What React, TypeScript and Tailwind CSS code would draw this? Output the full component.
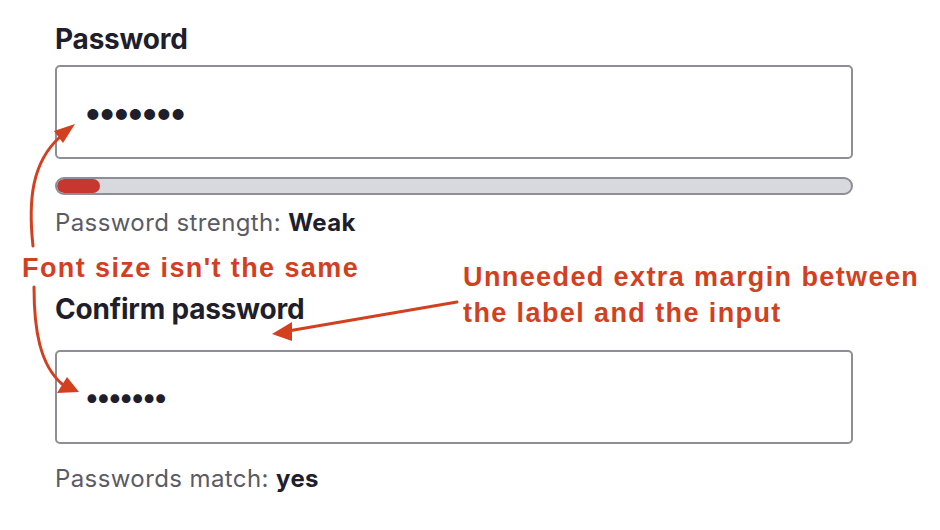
export default function App() {
  const red = '#d2401f';
  return (
    <div className="relative h-[530px] w-[940px] overflow-hidden bg-white font-['Inter',sans-serif]">
      <div className="ml-[55px] flex w-[798px] flex-col pt-[22px]">
        <label className="text-[28px] font-bold leading-[35px] tracking-[-0.2px] text-[#1e1e2c]">Password</label>
        <div className="mt-[8px] flex h-[94px] items-center rounded-[5px] border-2 border-[#8e8f96] pl-[26px]">
          <span className="text-[35px] leading-none tracking-[-5.5px] text-[#1e1e2c]">•••••••</span>
        </div>
        <div className="mt-[18px] h-[18px] overflow-hidden rounded-full border-2 border-[#8e8f96] bg-[#d8d9de]">
          <div className="h-full w-[43px] rounded-full bg-[#c8372f]" />
        </div>
        <p className="mt-[10px] text-[24px] leading-[36px] tracking-[0.4px] text-[#5a5b66]">
          Password strength: <span className="font-bold text-[#1e1e2c]">Weak</span>
        </p>
        <label className="mt-[51px] text-[28px] font-bold leading-[35px] tracking-[-0.2px] text-[#1e1e2c]">Confirm password</label>
        <div className="mt-[23px] flex h-[94px] items-center rounded-[5px] border-2 border-[#8e8f96] pl-[27px]">
          <span className="text-[28px] leading-none tracking-[-4.3px] text-[#1e1e2c]">•••••••</span>
        </div>
        <p className="mt-[17px] text-[24px] leading-[36px] tracking-[0.4px] text-[#5a5b66]">
          Passwords match: <span className="font-bold text-[#1e1e2c]">yes</span>
        </p>
      </div>

      {/* annotations */}
      <div className="absolute left-[22px] top-[250px] font-['Liberation_Sans',sans-serif] text-[27px] font-bold leading-[36px] tracking-[1.4px] text-[#d2401f]">
        Font size isn't the same
      </div>
      <div className="absolute left-[463px] top-[259px] font-['Liberation_Sans',sans-serif] text-[27px] font-bold leading-[36px] tracking-[1.4px] text-[#d2401f]">
        Unneeded extra margin between
        <br />
        the label and the input
      </div>
      <svg className="pointer-events-none absolute left-0 top-0" width="940" height="530" viewBox="0 0 940 530" fill="none">
        <path d="M33 246 C 28 200, 32 162, 60 137" stroke={red} strokeWidth="3" strokeLinecap="round" />
        <polygon points="75,124 54,131 63,143" fill={red} />
        <path d="M34 287 C 34 330, 40 365, 62 384" stroke={red} strokeWidth="3" strokeLinecap="round" />
        <polygon points="79,392 57,393 67,377" fill={red} />
        <path d="M457 302 L 288 331" stroke={red} strokeWidth="3" strokeLinecap="round" />
        <polygon points="272,334 292,322 292,341" fill={red} />
      </svg>
    </div>
  );
}
